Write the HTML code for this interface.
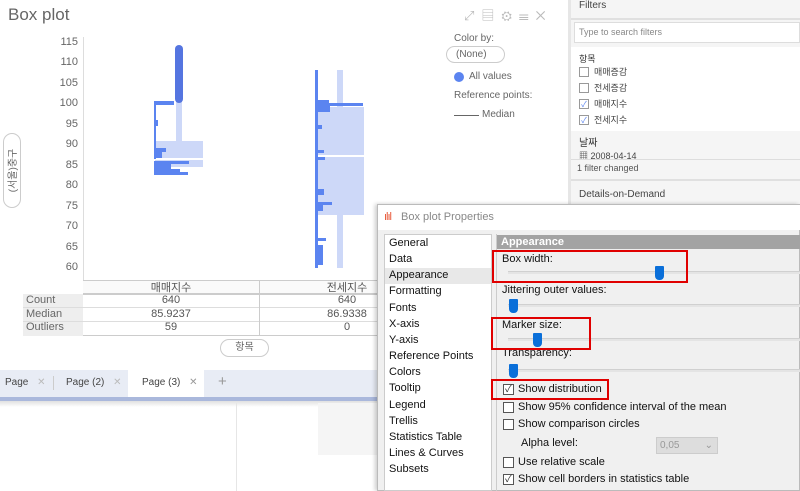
<!DOCTYPE html>
<html><head><meta charset="utf-8"><style>
*{margin:0;padding:0;box-sizing:border-box}
body{width:800px;height:491px;overflow:hidden;background:#fff;font-family:"Liberation Sans","Noto Sans CJK KR",sans-serif;position:relative;color:#555}
.a{position:absolute}
.t{position:absolute;white-space:nowrap}
.yl{position:absolute;left:50px;width:28px;text-align:right;font-size:11px;color:#666}
.b{position:absolute;background:#5b84f0}
.lb{position:absolute;background:#cdd8f8}
.dl{font-size:11px;color:#111;position:absolute;left:389px}
.cb{position:absolute;width:11px;height:11px;border:1px solid #555;background:#fff;left:503px}
.op{position:absolute;left:518px;font-size:11px;color:#111;white-space:nowrap}
.sl{position:absolute;left:508px;width:292px;height:3px;background:#e4e4e4;border-top:1px solid #d0d0d0}
.th{position:absolute;width:9px;height:14px;background:#0a6fd9;border-radius:1px 1px 4px 4px}
.red{position:absolute;border:2px solid #e00000}
</style></head><body>
<div class="t" style="left:8px;top:5px;font-size:17px;color:#666">Box plot</div>
<div class="a" style="left:83px;top:37px;width:1px;height:244px;background:#ddd"></div>
<div class="yl" style="top:36px">115</div><div class="yl" style="top:56px">110</div><div class="yl" style="top:77px">105</div><div class="yl" style="top:97px">100</div><div class="yl" style="top:118px">95</div><div class="yl" style="top:138px">90</div><div class="yl" style="top:159px">85</div><div class="yl" style="top:179px">80</div><div class="yl" style="top:200px">75</div><div class="yl" style="top:220px">70</div><div class="yl" style="top:241px">65</div><div class="yl" style="top:261px">60</div>
<div class="a" style="left:3px;top:133px;width:18px;height:75px;border:1px solid #ccc;border-radius:9px"></div>
<div class="t" style="left:-26px;top:163px;font-size:10px;color:#666;transform:rotate(-90deg);width:75px;text-align:center">(서울)중구</div>
<div class="lb" style="left:176px;top:100px;width:6px;height:41px"></div>
<div class="lb" style="left:155px;top:141px;width:48px;height:26px"></div>
<div class="a" style="left:155px;top:158px;width:48px;height:2px;background:#fff"></div>
<div class="a" style="left:175px;top:45px;width:8px;height:58px;background:#5575e0;border-radius:4px"></div>
<div class="b" style="left:154px;top:101px;width:20px;height:4px"></div>
<div class="b" style="left:154px;top:105px;width:2px;height:54px"></div>
<div class="b" style="left:154px;top:120px;width:4px;height:6px"></div>
<div class="b" style="left:154px;top:148px;width:12px;height:4px"></div>
<div class="b" style="left:154px;top:152px;width:8px;height:6px"></div>
<div class="b" style="left:154px;top:161px;width:35px;height:3px"></div>
<div class="b" style="left:154px;top:164px;width:17px;height:5px"></div>
<div class="b" style="left:154px;top:169px;width:26px;height:3px"></div>
<div class="b" style="left:154px;top:172px;width:34px;height:3px"></div>
<div class="lb" style="left:337px;top:70px;width:6px;height:198px"></div>
<div class="lb" style="left:315px;top:107px;width:49px;height:108px"></div>
<div class="a" style="left:315px;top:155px;width:49px;height:2px;background:#fff"></div>
<div class="b" style="left:315px;top:70px;width:3px;height:198px"></div>
<div class="b" style="left:315px;top:100px;width:14px;height:5px"></div>
<div class="b" style="left:315px;top:103px;width:48px;height:3px"></div>
<div class="b" style="left:315px;top:106px;width:15px;height:6px"></div>
<div class="b" style="left:315px;top:125px;width:7px;height:4px"></div>
<div class="b" style="left:315px;top:150px;width:9px;height:3px"></div>
<div class="b" style="left:315px;top:157px;width:10px;height:3px"></div>
<div class="b" style="left:315px;top:189px;width:9px;height:6px"></div>
<div class="b" style="left:315px;top:202px;width:17px;height:3px"></div>
<div class="b" style="left:315px;top:205px;width:8px;height:6px"></div>
<div class="b" style="left:315px;top:238px;width:11px;height:3px"></div>
<div class="b" style="left:315px;top:245px;width:8px;height:20px"></div>
<div class="a" style="left:83px;top:280px;width:300px;height:1px;background:#ccc"></div>
<div class="a" style="left:83px;top:281px;width:300px;height:13px;background:#fafafa;border-bottom:1px solid #ccc"></div>
<div class="t" style="left:83px;top:279px;width:176px;text-align:center;font-size:11px;color:#555">매매지수</div>
<div class="t" style="left:259px;top:279px;width:176px;text-align:center;font-size:11px;color:#555">전세지수</div>
<div class="a" style="left:23px;top:294px;width:360px;height:42px;border:1px solid #ccc;border-right:none"></div>
<div class="a" style="left:23px;top:294px;width:60px;height:42px;background:#eee"></div>
<div class="a" style="left:23px;top:307px;width:360px;height:1px;background:#ddd"></div>
<div class="a" style="left:23px;top:321px;width:360px;height:1px;background:#ddd"></div>
<div class="a" style="left:259px;top:281px;width:1px;height:55px;background:#ccc"></div>
<div class="t" style="left:26px;top:294px;font-size:11px;color:#666">Count</div>
<div class="t" style="left:26px;top:308px;font-size:11px;color:#666">Median</div>
<div class="t" style="left:26px;top:321px;font-size:11px;color:#666">Outliers</div>
<div class="t" style="left:83px;top:294px;width:176px;text-align:center;font-size:11px">640</div>
<div class="t" style="left:83px;top:308px;width:176px;text-align:center;font-size:11px">85.9237</div>
<div class="t" style="left:83px;top:321px;width:176px;text-align:center;font-size:11px">59</div>
<div class="t" style="left:259px;top:294px;width:176px;text-align:center;font-size:11px">640</div>
<div class="t" style="left:259px;top:308px;width:176px;text-align:center;font-size:11px">86.9338</div>
<div class="t" style="left:259px;top:321px;width:176px;text-align:center;font-size:11px">0</div>
<div class="a" style="left:220px;top:339px;width:49px;height:18px;border:1px solid #ccc;border-radius:9px;font-size:10px;text-align:center;line-height:16px;color:#666">항목</div>
<div class="t" style="left:464px;top:5px;font-size:13px;color:#bbb;letter-spacing:7px">⤢▤⚙☰✕</div>
<div class="t" style="left:454px;top:33px;font-size:10px;color:#666">Color by:</div>
<div class="a" style="left:446px;top:46px;width:59px;height:17px;border:1px solid #ccc;border-radius:9px;font-size:10px;line-height:15px;padding-left:9px;color:#666">(None)</div>
<div class="a" style="left:454px;top:72px;width:10px;height:10px;border-radius:50%;background:#5b84f0"></div>
<div class="t" style="left:469px;top:71px;font-size:10px;color:#666">All values</div>
<div class="t" style="left:454px;top:90px;font-size:10px;color:#666">Reference points:</div>
<div class="a" style="left:454px;top:115px;width:25px;height:1px;background:#666"></div>
<div class="t" style="left:482px;top:109px;font-size:10px;color:#666">Median</div>
<div class="a" style="left:568px;top:0;width:232px;height:205px;background:#f5f5f5;border-left:3px solid #e6e6e6"></div>
<div class="t" style="left:579px;top:0px;font-size:10px;color:#444">Filters</div>
<div class="a" style="left:571px;top:18px;width:229px;height:2px;background:#e0e0e0"></div>
<div class="a" style="left:574px;top:22px;width:226px;height:21px;background:#fff;border:1px solid #ddd;font-size:9px;color:#888;line-height:19px;padding-left:4px">Type to search filters</div>
<div class="a" style="left:571px;top:47px;width:229px;height:84px;background:#fff"></div>
<div class="t" style="left:579px;top:52px;font-size:9px;color:#333">항목</div>
<div class="a" style="left:579px;top:67px;width:10px;height:10px;border:1px solid #999"></div><div class="t" style="left:594px;top:65px;font-size:9px;color:#444">매매증감</div>
<div class="a" style="left:579px;top:83px;width:10px;height:10px;border:1px solid #999"></div><div class="t" style="left:594px;top:81px;font-size:9px;color:#444">전세증감</div>
<div class="a" style="left:579px;top:99px;width:10px;height:10px;border:1px solid #999;font-size:8px;color:#5b84f0;line-height:9px;text-align:center">✓</div><div class="t" style="left:594px;top:97px;font-size:9px;color:#444">매매지수</div>
<div class="a" style="left:579px;top:115px;width:10px;height:10px;border:1px solid #999;font-size:8px;color:#5b84f0;line-height:9px;text-align:center">✓</div><div class="t" style="left:594px;top:113px;font-size:9px;color:#444">전세지수</div>
<div class="t" style="left:579px;top:134px;font-size:10px;color:#333">날짜</div>
<div class="t" style="left:579px;top:149px;font-size:9px;color:#444">▦ 2008-04-14</div>
<div class="a" style="left:571px;top:159px;width:229px;height:1px;background:#ddd"></div>
<div class="t" style="left:577px;top:163px;font-size:9px;color:#555">1 filter changed</div>
<div class="a" style="left:571px;top:179px;width:229px;height:2px;background:#e0e0e0"></div>
<div class="t" style="left:579px;top:189px;font-size:10px;color:#444">Details-on-Demand</div>
<div class="a" style="left:0;top:370px;width:378px;height:27px;background:#e8ecf5"></div>
<div class="a" style="left:0;top:397px;width:378px;height:4px;background:#aab8dc"></div>
<div class="a" style="left:128px;top:370px;width:76px;height:27px;background:#fff"></div>
<div class="t" style="left:5px;top:377px;font-size:10px;color:#444">Page <span style="color:#bbb;margin-left:6px">✕</span></div>
<div class="a" style="left:53px;top:376px;width:1px;height:14px;background:#ccc"></div>
<div class="t" style="left:66px;top:377px;font-size:10px;color:#444">Page (2) <span style="color:#bbb;margin-left:6px">✕</span></div>
<div class="t" style="left:142px;top:377px;font-size:10px;color:#444">Page (3) <span style="color:#999;margin-left:6px">✕</span></div>
<div class="t" style="left:218px;top:373px;font-size:15px;color:#999">+</div>
<div class="a" style="left:0;top:401px;width:378px;height:6px;background:linear-gradient(#e0e0e0,#fff)"></div>
<div class="a" style="left:236px;top:403px;width:1px;height:88px;background:#e6e6e6"></div>
<div class="a" style="left:318px;top:403px;width:60px;height:52px;background:#f5f5f5"></div>
<div class="a" style="left:377px;top:204px;width:423px;height:287px;background:#f0f0f0;border:1px solid #bbb;box-shadow:-2px 0 4px rgba(0,0,0,.2)"></div>
<div class="a" style="left:378px;top:205px;width:422px;height:25px;background:#fff"></div>
<div class="t" style="left:384px;top:211px;font-size:11px;color:#e85a3a;letter-spacing:-1px">ılıl</div>
<div class="t" style="left:401px;top:211px;font-size:11px;color:#888">Box plot Properties</div>
<div class="a" style="left:384px;top:234px;width:108px;height:257px;background:#fff;border:1px solid #ccc"></div>
<div class="a" style="left:385px;top:268px;width:106px;height:16px;background:#e8e8e8"></div>
<div class="dl" style="top:237px">General</div><div class="dl" style="top:253px">Data</div><div class="dl" style="top:269px">Appearance</div><div class="dl" style="top:285px">Formatting</div><div class="dl" style="top:302px">Fonts</div><div class="dl" style="top:318px">X-axis</div><div class="dl" style="top:334px">Y-axis</div><div class="dl" style="top:350px">Reference Points</div><div class="dl" style="top:366px">Colors</div><div class="dl" style="top:382px">Tooltip</div><div class="dl" style="top:399px">Legend</div><div class="dl" style="top:415px">Trellis</div><div class="dl" style="top:431px">Statistics Table</div><div class="dl" style="top:447px">Lines &amp; Curves</div><div class="dl" style="top:463px">Subsets</div>
<div class="a" style="left:496px;top:234px;width:304px;height:257px;border-left:1px solid #ccc"></div>
<div class="a" style="left:497px;top:235px;width:303px;height:14px;background:#a3a3a3;color:#fff;font-weight:bold;font-size:11px;line-height:14px;padding-left:4px">Appearance</div>
<div class="op" style="left:502px;top:253px">Box width:</div>
<div class="sl" style="top:271px"></div><div class="th" style="left:655px;top:266px"></div>
<div class="op" style="left:502px;top:284px">Jittering outer values:</div>
<div class="sl" style="top:304px"></div><div class="th" style="left:509px;top:299px"></div>
<div class="op" style="left:502px;top:319px">Marker size:</div>
<div class="sl" style="top:338px"></div><div class="th" style="left:533px;top:333px"></div>
<div class="op" style="left:502px;top:347px">Transparency:</div>
<div class="sl" style="top:369px"></div><div class="th" style="left:509px;top:364px"></div>
<div class="cb" style="top:384px;font-size:10px;line-height:9px;text-align:center;color:#333">✓</div><div class="op" style="top:383px">Show distribution</div>
<div class="cb" style="top:402px"></div><div class="op" style="top:401px">Show 95% confidence interval of the mean</div>
<div class="cb" style="top:419px"></div><div class="op" style="top:418px">Show comparison circles</div>
<div class="op" style="left:521px;top:437px">Alpha level:</div>
<div class="a" style="left:656px;top:437px;width:62px;height:17px;background:#ddd;border:1px solid #ccc;font-size:10px;color:#999;line-height:15px;padding-left:3px">0,05<span style="float:right;margin-right:4px">⌄</span></div>
<div class="cb" style="top:457px"></div><div class="op" style="top:456px">Use relative scale</div>
<div class="cb" style="top:474px;font-size:10px;line-height:9px;text-align:center;color:#333">✓</div><div class="op" style="top:473px">Show cell borders in statistics table</div>
<div class="red" style="left:492px;top:250px;width:196px;height:33px"></div>
<div class="red" style="left:491px;top:317px;width:100px;height:33px"></div>
<div class="red" style="left:491px;top:379px;width:118px;height:21px"></div>
</body></html>
